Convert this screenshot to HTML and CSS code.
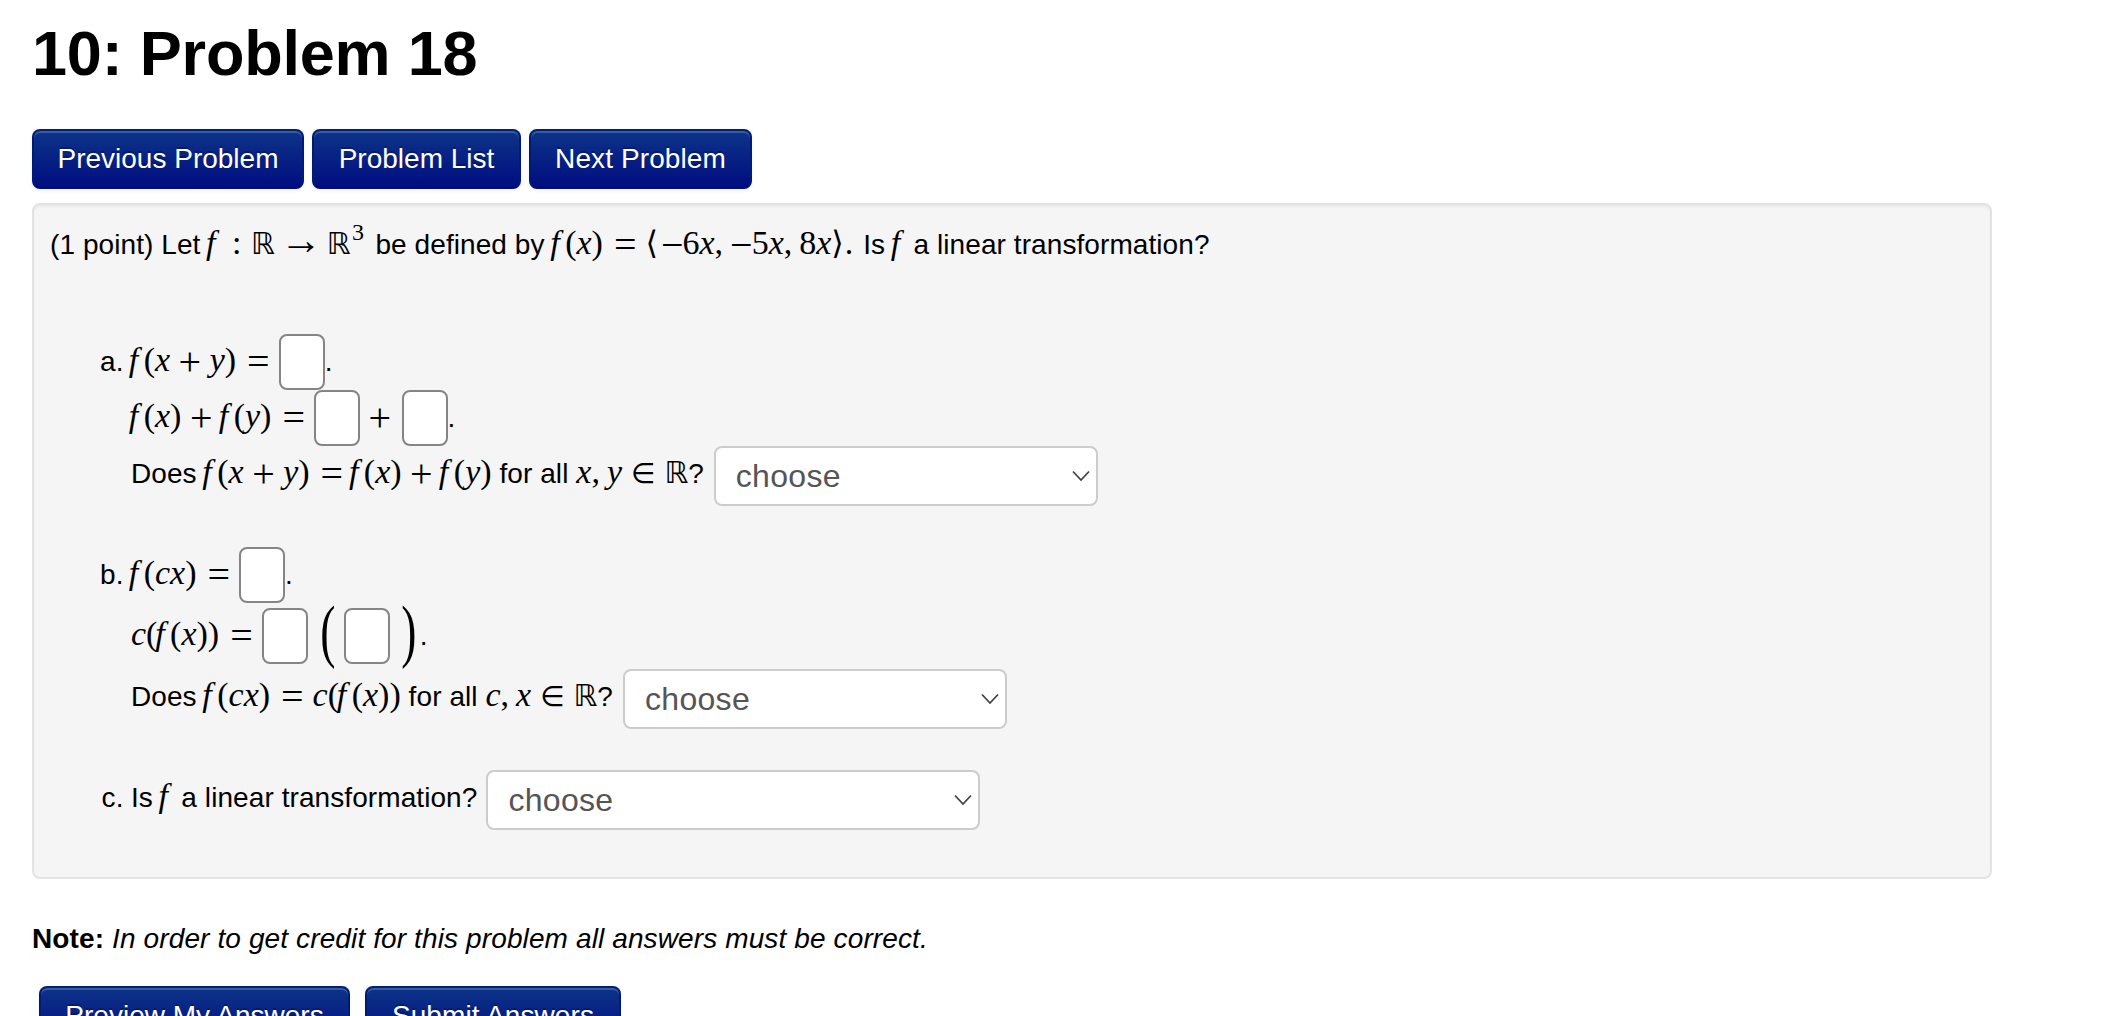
FILE: index.html
```html
<!DOCTYPE html>
<html lang="en">
<head>
<meta charset="utf-8">
<title>10: Problem 18</title>
<link rel="stylesheet" href="styles.css">
</head>
<body>
<h1>10: Problem 18</h1>
<nav class="nav"><a class="btn prev">Previous Problem</a><a class="btn list">Problem List</a><a class="btn next">Next Problem</a></nav>
<main class="well">
<p class="intro">(1 point) Let <i class="f">f</i><b class="colon">:</b><b class="bb">ℝ</b><b class="arrow">→</b><b class="bb">ℝ</b><sup>3</sup> be defined by <i class="f">f</i><b>(</b><i>x</i><b>)</b><b class="rel">=</b><b class="angle">⟨</b><b class="neg">−</b><b>6</b><i>x</i><b class="comma">,</b><b class="neg">−</b><b>5</b><i>x</i><b class="comma">,</b><b>8</b><i>x</i><b class="angle">⟩</b><b class="stop">.</b> Is <i class="f">f</i> a linear transformation?</p>
<section class="part">
<div class="row"><span class="label">a.</span><i class="f">f</i><b>(</b><i>x</i><b class="op">+</b><i>y</i><b>)</b><b class="rel">=</b><input class="blank">.</div>
<div class="row sub"><i class="f">f</i><b>(</b><i>x</i><b>)</b><b class="op">+</b><i class="f">f</i><b>(</b><i>y</i><b>)</b><b class="rel">=</b><input class="blank"><b class="op">+</b><input class="blank">.</div>
<div class="row sub ask">Does <i class="f">f</i><b>(</b><i>x</i><b class="op">+</b><i>y</i><b>)</b><b class="rel tight">=</b><i class="f">f</i><b>(</b><i>x</i><b>)</b><b class="op">+</b><i class="f">f</i><b>(</b><i>y</i><b>)</b> for all <i>x</i><b class="comma">,</b><i>y</i><b class="in">∈</b><b class="bb">ℝ</b>?<span class="choice"><select><option>choose</option></select><svg viewBox="0 0 18 12"><path d="M1 1.5 9 10 17 1.5"/></svg></span></div>
</section>
<section class="part tall">
<div class="row"><span class="label">b.</span><i class="f">f</i><b>(</b><i>c</i><i>x</i><b>)</b><b class="rel">=</b><input class="blank">.</div>
<div class="row sub"><i>c</i><b>(</b><i class="f">f</i><b>(</b><i>x</i><b>)</b><b>)</b><b class="rel">=</b><input class="blank"><b class="big open">(</b><input class="blank"><b class="big close">)</b>.</div>
<div class="row sub ask">Does <i class="f">f</i><b>(</b><i>c</i><i>x</i><b>)</b><b class="rel">=</b><i>c</i><b>(</b><i class="f">f</i><b>(</b><i>x</i><b>)</b><b>)</b> for all <i>c</i><b class="comma">,</b><i>x</i><b class="in">∈</b><b class="bb">ℝ</b>?<span class="choice"><select><option>choose</option></select><svg viewBox="0 0 18 12"><path d="M1 1.5 9 10 17 1.5"/></svg></span></div>
</section>
<section class="part">
<div class="row ask"><span class="label">c.</span>Is <i class="f">f</i> a linear transformation?<span class="choice wide"><select><option>choose</option></select><svg viewBox="0 0 18 12"><path d="M1 1.5 9 10 17 1.5"/></svg></span></div>
</section>
</main>
<p class="note"><strong>Note:</strong> <em>In order to get credit for this problem all answers must be correct.</em></p>
<div class="nav actions"><a class="btn preview">Preview My Answers</a><a class="btn submit">Submit Answers</a></div>
</body>
</html>
```
FILE: styles.css
```css
* { box-sizing: border-box; }
html { overflow: hidden; }
body {
  margin: 0;
  padding: 13px 126px 0 32px;
  height: 1016px;
  overflow: hidden;
  background: #fff;
  color: #000;
  font: 28px/40px "Liberation Sans", Arial, sans-serif;
}
h1 { margin: 0 0 36px; font-size: 63px; line-height: 80px; font-weight: bold; letter-spacing: -.2px; }
.nav { display: flex; gap: 8px; }
.btn {
  height: 60px;
  padding: 8px 0 0;
  text-align: center;
  border: 2px solid;
  border-color: #00207a #001a78 #000f70;
  border-radius: 8px;
  background: linear-gradient(#0d3588, #000c80);
  background-origin: border-box;
  box-shadow: inset 0 2px 0 rgba(255, 255, 255, .2), 0 2px 4px rgba(0, 0, 0, .05);
  color: #fff;
  text-shadow: 0 -2px 0 rgba(0, 0, 0, .25);
  white-space: nowrap;
}
.prev { width: 272px; }
.list { width: 209px; }
.next { width: 223px; letter-spacing: .1px; }
.preview { width: 311px; }
.submit { width: 256px; letter-spacing: .1px; }
.well {
  height: 676px;
  margin-top: 14px;
  padding: 20px 16px;
  border: 2px solid #e3e3e3;
  border-radius: 8px;
  background: #f5f5f5;
  box-shadow: inset 0 2px 2px rgba(0, 0, 0, .05);
  letter-spacing: .08px;
}
.intro { margin: 0 0 69px; height: 40px; white-space: pre; }

/* Math tokens */
.well i, .well b {
  font-family: "Liberation Serif", "Times New Roman", serif;
  font-size: 34px;
  font-weight: normal;
  line-height: 0;
  letter-spacing: 0;
}
.well .f { margin: 0 5.5px 0 -2.3px; }
.well .op, .well .rel, .well .neg { font-size: 40px; vertical-align: -4px; }
.well .op { margin: 0 8.5px; }
.well .blank + .op { margin-right: 10.5px; }
.well .rel { margin: 0 9px 0 11px; }
.well .tight { margin-right: 8px; }
.well .neg { margin: 0 -1px 0 3px; }
.well .colon { margin: 0 9.5px 0 11px; }
.well .comma { margin-right: 7px; }
.well .comma + .neg { margin-left: 0; }
.well .bb { font: 30px/0 "DejaVu Sans", sans-serif; }
.well .arrow { margin: 0 5px; font-size: 42px; vertical-align: 0; }
.well .in { margin: 0 9px; font: 28px/0 "DejaVu Sans", sans-serif; }
.well .angle { font: 32px/0 "DejaVu Sans", sans-serif; }
.well .stop { margin: 0 2px 0 1px; }
sup { margin: 0 3.5px 0 1.5px; font: 24px/0 "Liberation Serif", serif; vertical-align: 14px; }
.well .big { display: inline-block; width: 24px; font-size: 70px; vertical-align: -9px; transform: scaleX(.65); }
.well .open { margin: 0 4px 0 8px; }
.well .close { margin: 0 -1px 0 7px; }

/* Question parts */
.part { margin: 0 0 41px 48px; }
.row { height: 56px; line-height: 56px; white-space: pre; }
.tall .row { height: 61px; }
.part .ask { height: 60px; }
.sub { padding-left: 33px; }
.label { display: inline-block; width: 33px; padding-right: 7.5px; text-align: right; }
.blank {
  width: 46px;
  height: 56px;
  margin: 0;
  padding: 0;
  border: 2px solid #858585;
  border-radius: 8px;
  background: #fff;
  vertical-align: top;
}
.choice {
  display: inline-grid;
  width: 384px;
  height: 60px;
  margin-left: 10px;
  vertical-align: top;
  align-items: center;
}
.wide { width: 494px; margin-left: 9px; }
.choice select, .choice svg { grid-area: 1 / 1; }
.choice select {
  appearance: none;
  width: 100%;
  height: 60px;
  padding: 0 20px;
  border: 2px solid #ccc;
  border-radius: 8px;
  background: #fff;
  color: #555;
  font: 32px "Liberation Sans", Arial, sans-serif;
  letter-spacing: .3px;
}
.choice svg { width: 18px; height: 12px; justify-self: end; margin-right: 8px; fill: none; stroke: #444; stroke-width: 1.8; }
.note { margin: 40px 0 27px; letter-spacing: .12px; }
.actions { gap: 15px; padding-left: 7px; }
```
